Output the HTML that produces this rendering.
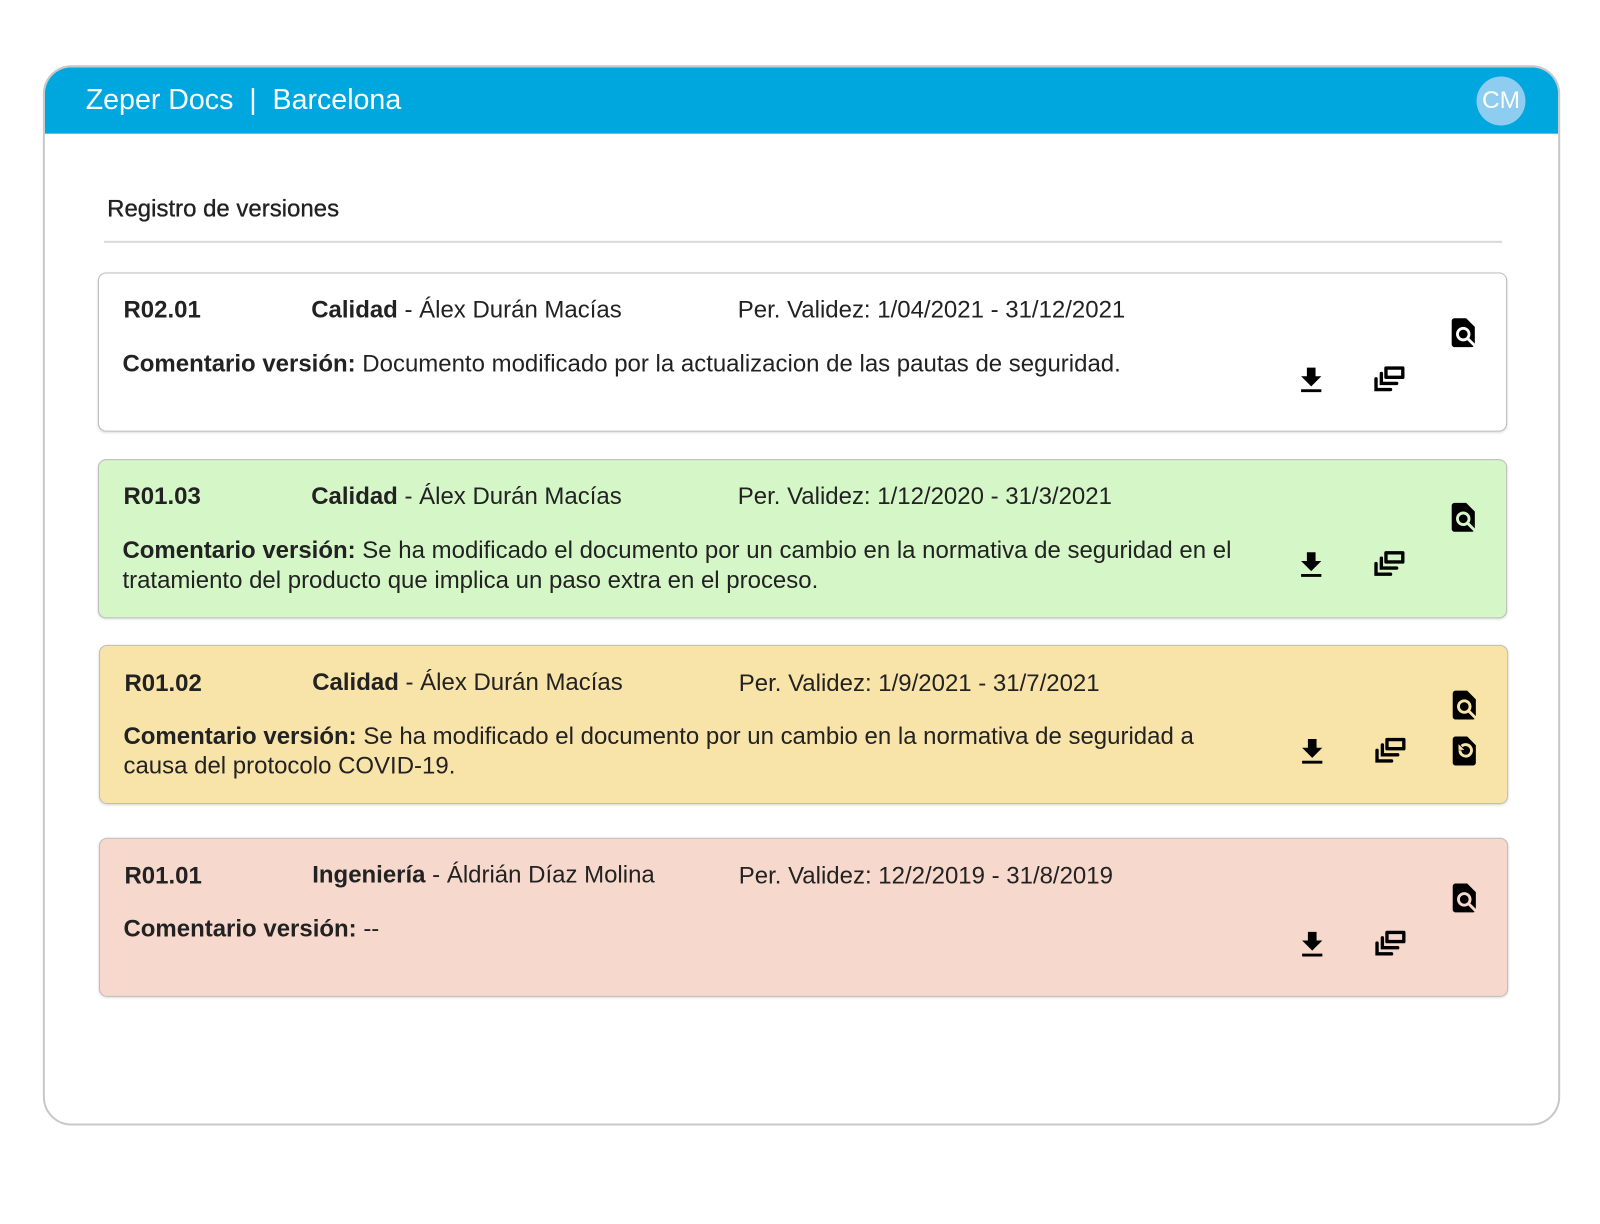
<!DOCTYPE html>
<html><head><meta charset="utf-8"><style>
*{margin:0;padding:0;box-sizing:border-box}
body{width:1600px;height:1200px;background:#fff;font-family:"Liberation Sans",Arial,sans-serif;color:#222;position:relative;overflow:hidden}
#w{position:absolute;left:0;top:0;width:1600px;height:1200px;transform:scale(1.0204);transform-origin:0 0}
.frame{position:absolute;left:42px;top:64px;width:1487px;height:1039px;border:2px solid #c8c8c8;border-radius:28px;overflow:hidden}
.hdr{position:absolute;left:0;top:0;right:0;height:65px;background:#00a7df;color:#fff;font-size:28px;line-height:64px;padding-left:40px}
.av{position:absolute;right:32px;top:9px;width:48px;height:48px;border-radius:50%;background:#8fcdf0;color:#fff;font-size:24px;line-height:48px;text-align:center}
.ttl{position:absolute;left:105px;top:191px;font-size:23.5px;color:#222;text-shadow:0 0 .6px #222,0 0 .3px #222}
.rule{position:absolute;left:102px;top:236px;width:1370px;height:2px;background:#d8d8d8}
.card{position:absolute;left:96px;width:1381px;height:156px;border:1.5px solid #bdbdbd;border-radius:8px;font-size:23.5px;box-shadow:0 1px 2px rgba(0,0,0,.12)}
.card .t{position:absolute;top:22px;white-space:nowrap}
.card .c{position:absolute;left:23px;top:74px;width:1102px;line-height:29px}
.card svg{position:absolute}
b{font-weight:bold}
</style></head><body><div id="w">
<div class="frame"><div class="hdr">Zeper Docs &nbsp;|&nbsp; Barcelona<div class="av">CM</div></div></div>
<div class="ttl">Registro de versiones</div>
<div class="rule"></div>

<svg width="0" height="0" style="position:absolute"><defs>
<symbol id="dl" viewBox="0 0 24 24"><path d="M19 9h-4V3H9v6H5l7 7 7-7zM5 18v2h14v-2H5z"/></symbol>
<symbol id="cp" viewBox="0 0 24 24"><path fill="none" stroke="#000" stroke-width="2.2" stroke-linejoin="round" d="M9.5 4.5h11v6h-11z"/><path fill="none" stroke="#000" stroke-width="2.2" stroke-linecap="round" d="M6.5 8v6.5h10M3 11.5v7h9.5"/></symbol>
<symbol id="fp" viewBox="0 0 24 24"><path d="M20 19.59V8l-6-6H6c-1.1 0-1.99.9-1.99 2L4 20c0 1.1.89 2 1.99 2H18c.45 0 .85-.15 1.19-.4l-4.43-4.430c-.8.52-1.74.83-2.76.83-2.76 0-5-2.240-5-5s2.24-5 5-5 5 2.24 5 5c0 1.020-.31 1.960-.83 2.75L20 19.59zM9 13c0 1.66 1.34 3 3 3s3-1.34 3-3-1.34-3-3-3-3 1.34-3 3z"/></symbol>
<symbol id="rs" viewBox="0 0 24 24"><path d="M6 2h8l6 6v12c0 1.1-.9 2-2 2H6c-1.1 0-2-.9-2-2V4c0-1.1.9-2 2-2z"/><path fill="none" stroke="#f8e4a9" stroke-width="2" d="M9 11.5a4 4 0 1 0 1.2-2.8"/><path fill="#f8e4a9" d="M8 7.2v4h4z"/></symbol>
</defs></svg>

<div class="card" style="top:267px;background:#fff">
<div class="t" style="left:24px"><b>R02.01</b></div>
<div class="t" style="left:208px"><b>Calidad</b> - Álex Durán Macías</div>
<div class="t" style="left:626px">Per. Validez: 1/04/2021 - 31/12/2021</div>
<div class="c"><b>Comentario versión:</b> Documento modificado por la actualizacion de las pautas de seguridad.</div>
<svg style="left:1171px;top:88px" width="34" height="34"><use href="#dl"/></svg>
<svg style="left:1247px;top:86px" width="36" height="36"><use href="#cp"/></svg>
<svg style="left:1320px;top:41px" width="34" height="34"><use href="#fp"/></svg>
</div>

<div class="card" style="top:450px;background:#d5f7c8">
<div class="t" style="left:24px"><b>R01.03</b></div>
<div class="t" style="left:208px"><b>Calidad</b> - Álex Durán Macías</div>
<div class="t" style="left:626px">Per. Validez: 1/12/2020 - 31/3/2021</div>
<div class="c"><b>Comentario versión:</b> Se ha modificado el documento por un cambio en la normativa de seguridad en el tratamiento del producto que implica un paso extra en el proceso.</div>
<svg style="left:1171px;top:86px" width="34" height="34"><use href="#dl"/></svg>
<svg style="left:1247px;top:84px" width="36" height="36"><use href="#cp"/></svg>
<svg style="left:1320px;top:39px" width="34" height="34"><use href="#fp"/></svg>
</div>

<div class="card" style="top:632px;left:97px;background:#f8e4a9">
<div class="t" style="left:24px;top:23px"><b>R01.02</b></div>
<div class="t" style="left:208px"><b>Calidad</b> - Álex Durán Macías</div>
<div class="t" style="left:626px;top:23px">Per. Validez: 1/9/2021 - 31/7/2021</div>
<div class="c"><b>Comentario versión:</b> Se ha modificado el documento por un cambio en la normativa de seguridad a<br>causa del protocolo COVID-19.</div>
<svg style="left:1171px;top:87px" width="34" height="34"><use href="#dl"/></svg>
<svg style="left:1247px;top:85px" width="36" height="36"><use href="#cp"/></svg>
<svg style="left:1320px;top:41px" width="34" height="34"><use href="#fp"/></svg>
<svg style="left:1320px;top:86px" width="34" height="34"><use href="#rs"/></svg>
</div>

<div class="card" style="top:821px;left:97px;background:#f6d9cc">
<div class="t" style="left:24px;top:23px"><b>R01.01</b></div>
<div class="t" style="left:208px"><b>Ingeniería</b> - Áldrián Díaz Molina</div>
<div class="t" style="left:626px;top:23px">Per. Validez: 12/2/2019 - 31/8/2019</div>
<div class="c"><b>Comentario versión:</b> --</div>
<svg style="left:1171px;top:87px" width="34" height="34"><use href="#dl"/></svg>
<svg style="left:1247px;top:85px" width="36" height="36"><use href="#cp"/></svg>
<svg style="left:1320px;top:41px" width="34" height="34"><use href="#fp"/></svg>
</div>
</div></body></html>
